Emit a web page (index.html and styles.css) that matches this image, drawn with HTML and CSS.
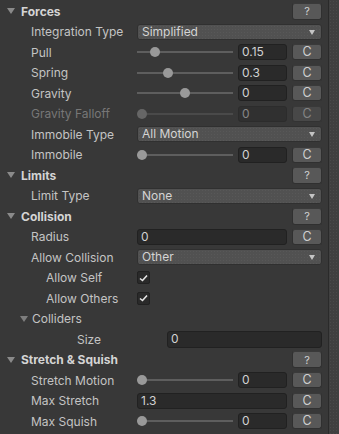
FILE: index.html
```html
<!DOCTYPE html>
<html lang="en">
<head>
  <meta charset="UTF-8">
  <title>Spring Bone Inspector</title>
  <link rel="stylesheet" href="styles.css">
</head>
<body>
  <div class="inspector">
    <div class="panel">

      <!-- Forces -->
      <div class="row header">
        <span class="fold"></span><span class="title">Forces</span>
        <button class="btn help">?</button>
      </div>
      <div class="row">
        <span class="label l1">Integration Type</span>
        <div class="dropdown">Simplified<span class="arrow"></span></div>
      </div>
      <div class="row">
        <span class="label l1">Pull</span>
        <div class="slider"><div class="track"></div><div class="knob" style="--v:0.15"></div></div>
        <div class="field small">0.15</div>
        <button class="btn">C</button>
      </div>
      <div class="row">
        <span class="label l1">Spring</span>
        <div class="slider"><div class="track"></div><div class="knob" style="--v:0.3"></div></div>
        <div class="field small">0.3</div>
        <button class="btn">C</button>
      </div>
      <div class="row">
        <span class="label l1">Gravity</span>
        <div class="slider"><div class="track"></div><div class="knob" style="--v:0.5"></div></div>
        <div class="field small">0</div>
        <button class="btn">C</button>
      </div>
      <div class="row disabled">
        <span class="label l1">Gravity Falloff</span>
        <div class="slider"><div class="track"></div><div class="knob" style="--v:0"></div></div>
        <div class="field small">0</div>
        <button class="btn">C</button>
      </div>
      <div class="row">
        <span class="label l1">Immobile Type</span>
        <div class="dropdown">All Motion<span class="arrow"></span></div>
      </div>
      <div class="row">
        <span class="label l1">Immobile</span>
        <div class="slider"><div class="track"></div><div class="knob" style="--v:0"></div></div>
        <div class="field small">0</div>
        <button class="btn">C</button>
      </div>

      <!-- Limits -->
      <div class="row header">
        <span class="fold"></span><span class="title">Limits</span>
        <button class="btn help">?</button>
      </div>
      <div class="row">
        <span class="label l1">Limit Type</span>
        <div class="dropdown">None<span class="arrow"></span></div>
      </div>

      <!-- Collision -->
      <div class="row header">
        <span class="fold"></span><span class="title">Collision</span>
        <button class="btn help">?</button>
      </div>
      <div class="row">
        <span class="label l1">Radius</span>
        <div class="field wide">0</div>
        <button class="btn">C</button>
      </div>
      <div class="row">
        <span class="label l1">Allow Collision</span>
        <div class="dropdown">Other<span class="arrow"></span></div>
      </div>
      <div class="row">
        <span class="label l2">Allow Self</span>
        <div class="check"><svg width="9" height="8" viewBox="0 0 9 8"><polyline points="1,4.5 3.5,6.5 8,1.5" fill="none" stroke="#e6e6e6" stroke-width="1.6"/></svg></div>
      </div>
      <div class="row">
        <span class="label l2">Allow Others</span>
        <div class="check"><svg width="9" height="8" viewBox="0 0 9 8"><polyline points="1,4.5 3.5,6.5 8,1.5" fill="none" stroke="#e6e6e6" stroke-width="1.6"/></svg></div>
      </div>
      <div class="row">
        <span class="fold sub"></span><span class="label">Colliders</span>
      </div>
      <div class="row">
        <span class="label l3">Size</span>
        <div class="field size">0</div>
      </div>

      <!-- Stretch & Squish -->
      <div class="row header">
        <span class="fold"></span><span class="title">Stretch &amp; Squish</span>
        <button class="btn help">?</button>
      </div>
      <div class="row">
        <span class="label l1">Stretch Motion</span>
        <div class="slider"><div class="track"></div><div class="knob" style="--v:0"></div></div>
        <div class="field small">0</div>
        <button class="btn">C</button>
      </div>
      <div class="row">
        <span class="label l1">Max Stretch</span>
        <div class="field wide">1.3</div>
        <button class="btn">C</button>
      </div>
      <div class="row">
        <span class="label l1">Max Squish</span>
        <div class="slider"><div class="track"></div><div class="knob" style="--v:0"></div></div>
        <div class="field small">0</div>
        <button class="btn">C</button>
      </div>

    </div>
    <div class="scrollbar"></div>
  </div>
</body>
</html>
```

FILE: styles.css
```css
body {
  margin: 0;
  background: #383838;
  font-family: Inter, "Noto Sans", sans-serif;
  font-size: 12px;
  color: #c4c4c4;
}

.inspector {
  display: flex;
  height: 434px;
  overflow: hidden;
}

.panel {
  flex: 1;
  padding: 0.75px 6px 0 0;
}

.scrollbar {
  width: 10px;
  border-left: 1px solid #2a2a2a;
  background-color: #404040;
  background-image: radial-gradient(rgba(255,255,255,0.05) 0.6px, transparent 0.8px);
  background-size: 3px 3px;
}

.row {
  display: flex;
  align-items: center;
  height: 20.5px;
  gap: 5px;
}

.row .label,
.row .title {
  white-space: nowrap;
}

.label {
  width: 137px;
  flex: none;
  box-sizing: border-box;
  margin-right: -5px;
}

.l1 { padding-left: 31px; }
.l2 { padding-left: 46px; }
.l3 { padding-left: 77px; width: 167px; }

.fold {
  width: 0;
  height: 0;
  border-left: 4px solid transparent;
  border-right: 4px solid transparent;
  border-top: 6px solid #8a8a8a;
  margin-left: 7px;
  margin-right: 1px;
  flex: none;
}

.fold.sub {
  margin-left: 20px;
  margin-right: -1px;
  border-top-color: #7d7d7d;
}

.fold.sub + .label {
  width: auto;
  margin: 0;
}

.header .title {
  font-weight: 700;
  color: #d4d4d4;
  flex: 1;
}

.btn {
  width: 30px;
  height: 16px;
  flex: none;
  padding: 0;
  border: 1px solid #303030;
  border-top-color: #3a3a3a;
  border-radius: 3px;
  background: #585858;
  color: #d0d0d0;
  font-family: Inter, "Noto Sans", sans-serif;
  font-size: 12.5px;
  line-height: 14px;
}

.btn.help {
  height: 17px;
  font-size: 11px;
}

.dropdown {
  flex: 1;
  position: relative;
  height: 16px;
  line-height: 14px;
  box-sizing: border-box;
  padding-left: 4px;
  border: 1px solid #303030;
  border-radius: 3px;
  background-color: #515151;
  background-image: radial-gradient(rgba(255,255,255,0.04) 0.6px, transparent 0.8px);
  background-size: 3px 3px;
  color: #d4d4d4;
}

.arrow {
  position: absolute;
  right: 6px;
  top: 5px;
  width: 0;
  height: 0;
  border-left: 3.5px solid transparent;
  border-right: 3.5px solid transparent;
  border-top: 5px solid #c4c4c4;
}

.field {
  height: 16px;
  line-height: 14px;
  box-sizing: border-box;
  padding-left: 3px;
  border: 1px solid #212121;
  border-radius: 3px;
  background: #2a2a2a;
  color: #d2d2d2;
  flex: none;
}

.field.small { width: 49px; }
.field.wide { width: 150px; }
.field.size { width: 155px; height: 17px; }

.slider {
  position: relative;
  width: 96px;
  height: 16px;
  flex: none;
}

.track {
  position: absolute;
  left: 0;
  right: 0;
  top: 7px;
  height: 2px;
  background: #5e5e5e;
}

.knob {
  position: absolute;
  top: 3px;
  left: calc(var(--v) * 86px);
  width: 10px;
  height: 10px;
  border-radius: 50%;
  background: #999999;
}

.check {
  width: 13px;
  height: 13px;
  box-sizing: border-box;
  border: 1px solid #212121;
  border-radius: 2px;
  background: #2a2a2a;
  display: flex;
  align-items: center;
  justify-content: center;
}

.disabled .label { color: #777777; }
.disabled .knob { background: #666666; }
.disabled .track { background: #4a4a4a; }
.disabled .field { opacity: 0.5; }
.disabled .btn { opacity: 0.5; }
```
